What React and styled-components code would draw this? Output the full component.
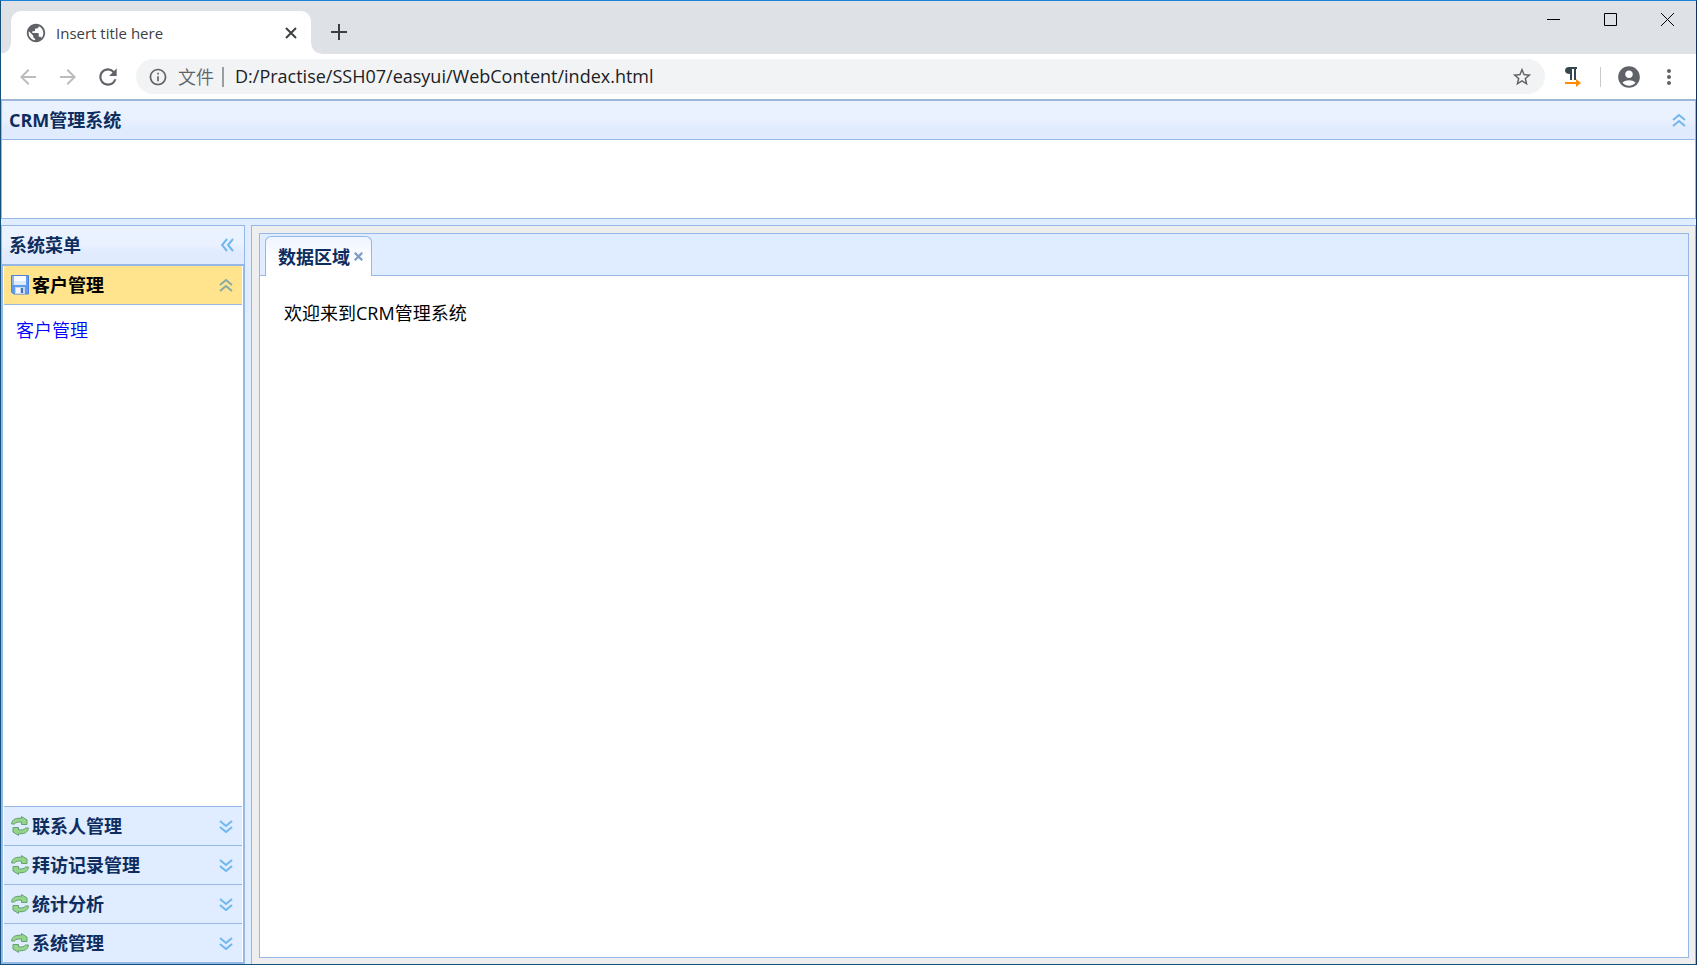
import React, { useState } from 'react';
import styled, { createGlobalStyle } from 'styled-components';
import {
  MdPublic, MdArrowBack, MdArrowForward, MdRefresh, MdInfoOutline,
  MdStarBorder, MdAccountCircle, MdMoreVert,
} from 'react-icons/md';

const GlobalStyle = createGlobalStyle`
  * { box-sizing: border-box; }
  body {
    margin: 0;
    font-family: 'Open Sans', 'Noto Sans CJK SC', sans-serif;
    font-size: 18px;
    line-height: 24px;
    color: #000;
  }
  button {
    border: 0;
    padding: 0;
    background: transparent;
    color: inherit;
    font: inherit;
    cursor: pointer;
  }
  svg { display: block; flex: none; }
`;

//  //  //  //  //  //  //
// BROWSER WINDOW       //
//  //  //  //  //  //  //

const BrowserWindow = styled.div`
  display: flex;
  flex-direction: column;
  height: 100vh;
  min-height: 560px;
  border: 1px solid #15507a;
  border-top-color: #1883d7;
  border-right-color: #14305c;
  overflow: hidden;
`;

const TabStrip = styled.header`
  display: flex;
  flex: none;
  height: 53px;
  padding: 10px 0 0 10px;
  background: #dee1e6;
`;

const BrowserTab = styled.div`
  position: relative;
  display: flex;
  align-items: center;
  width: 300px;
  padding: 0 13px 0 14px;
  border-radius: 10px 10px 0 0;
  background: #fff;
  color: #3c4043;
  font-size: 15px;
  &::before, &::after {
    content: '';
    position: absolute;
    bottom: 0;
    width: 10px;
    height: 10px;
  }
  &::before {
    right: 100%;
    background: radial-gradient(circle at 0 0, transparent 9px, #fff 10px);
  }
  &::after {
    left: 100%;
    background: radial-gradient(circle at 100% 0, transparent 9px, #fff 10px);
  }
`;

const TabTitle = styled.span`
  flex: 1;
  margin-left: 9px;
`;

const IconButton = styled.button`
  display: flex;
  align-items: center;
  justify-content: center;
  width: ${(props) => props.$width || 40}px;
  height: ${(props) => props.$height || 36}px;
  color: ${(props) => props.$color || '#5f6368'};
`;

const NewTabButton = styled(IconButton)`
  margin-left: 12px;
`;

const WindowButtons = styled.div`
  display: flex;
  margin: -10px 0 0 auto;
`;

const Toolbar = styled.nav`
  display: flex;
  flex: none;
  align-items: center;
  height: 46px;
  padding: 0 7px;
  border-bottom: 1px solid #a3b3c8;
  background: #fff;
`;

const AddressBar = styled.div`
  display: flex;
  flex: 1;
  align-items: center;
  height: 35px;
  margin-left: 8px;
  padding: 0 3px 0 12px;
  border-radius: 18px;
  background: #f1f3f4;
  color: #5f6368;
`;

const FileLabel = styled.label`
  margin-left: 10px;
  padding-right: 8px;
  border-right: 2px solid #9b9ea1;
  line-height: 20px;
  font-weight: 350;
`;

const AddressInput = styled.input`
  flex: 1;
  min-width: 0;
  margin-left: 11px;
  padding: 0 0 2px;
  border: 0;
  outline: 0;
  background: transparent;
  color: #202124;
  font: inherit;
`;

const ToolbarDivider = styled.span`
  width: 1px;
  height: 20px;
  margin: 0 8px 0 0;
  background: #c8cacd;
`;

//  //  //  //  //  //  //
// EASYUI LAYOUT        //
//  //  //  //  //  //  //

const Layout = styled.div`
  display: flex;
  flex: 1;
  flex-direction: column;
  gap: 6px;
  min-height: 0;
  background: #e0ecff;
`;

const LayoutRow = styled.div`
  display: flex;
  flex: 1;
  gap: 6px;
  min-height: 0;
`;

const NorthPanel = styled.section`
  border: 1px solid #95b8e7;
  background: #fff;
`;

const NorthBody = styled.div`
  height: 78px;
`;

const WestPanel = styled.aside`
  display: flex;
  flex: none;
  flex-direction: column;
  width: 244px;
  border: 1px solid #95b8e7;
`;

const CenterPanel = styled.main`
  display: flex;
  flex: 1;
  min-width: 0;
  padding: 7px 6px 6px 7px;
  border: 1px solid #95b8e7;
  border-bottom: 0;
  background: #eee;
`;

const PanelHeader = styled.div`
  display: flex;
  align-items: center;
  justify-content: space-between;
  height: 39px;
  padding: 0 9px 0 7px;
  border-bottom: 1px solid #95b8e7;
  background: linear-gradient(to bottom, #ebf2ff 45%, #e0ebfe 70%);
`;

const PanelTitle = styled.h1`
  margin: 0;
  color: #0e2d5f;
  font-size: 18px;
  font-weight: 700;
`;

const PanelTool = styled.button`
  display: flex;
  align-items: center;
  justify-content: center;
  width: 14px;
  height: 20px;
`;

const AccordionBox = styled.div`
  display: flex;
  flex: 1;
  flex-direction: column;
  min-height: 0;
  padding: 0 1px;
  border: 1px solid #95b8e7;
  background: #fff;
`;

const AccordionHeader = styled.button`
  display: flex;
  flex: none;
  align-items: center;
  gap: 3px;
  height: 39px;
  padding: 0 9px 0 7px;
  border: 0 solid #95b8e7;
  border-width: ${(props) => (props.$open ? '0 0 1px' : '1px 0 0')};
  background: ${(props) => (props.$open ? '#ffe48d' : '#e0ecff')};
  color: ${(props) => (props.$open ? '#000' : '#0e2d5f')};
  font-weight: 700;
  text-align: left;
`;

const AccordionTitle = styled.span`
  flex: 1;
`;

const AccordionBody = styled.div`
  flex: 1;
  min-height: 0;
  padding: 13px 12px;
`;

const MenuLink = styled.a`
  color: #00f;
  font-weight: 350;
  text-decoration: none;
`;

const Tabs = styled.div`
  display: flex;
  flex: 1;
  flex-direction: column;
  min-width: 0;
  border: 1px solid #95b8e7;
  background: #fff;
`;

const TabsHeader = styled.div`
  display: flex;
  align-items: flex-end;
  height: 42px;
  padding: 2px 5px 0;
  border-bottom: 1px solid #95b8e7;
  background: #e0ecff;
`;

const DataTab = styled.div`
  display: flex;
  align-items: center;
  height: 40px;
  margin-bottom: -1px;
  padding: 0 6px 0 12px;
  border: 1px solid #95b8e7;
  border-bottom: 0;
  border-radius: 6px 6px 0 0;
  background: linear-gradient(to bottom, #eff5ff 0, #fff 70%);
  color: #0e2d5f;
  font-weight: 700;
`;

const TabClose = styled(PanelTool)`
  margin-left: 1px;
`;

const TabBody = styled.div`
  flex: 1;
  padding: 25px 24px;
`;

//  //  //  //  //  //  //
// ICONS                //
//  //  //  //  //  //  //

const chevrons = {
  up: 'M1 7 7 2l6 5M1 13 7 8l6 5',
  down: 'M1 2 7 7l6-5M1 8l6 5 6-5',
  left: 'M6 1 1 7l5 6M12 1 7 7l5 6',
};

function ChevronIcon({ direction = 'up', color = '#6fb7ee' }) {
  return (
    <svg width="14" height="14" viewBox="0 0 14 14" fill="none" stroke={color} strokeWidth="2" aria-hidden="true">
      <path d={chevrons[direction]} />
    </svg>
  );
}

function CrossIcon({ size, color, strokeWidth }) {
  return (
    <svg width={size} height={size} viewBox="0 0 12 12" stroke={color} strokeWidth={strokeWidth} aria-hidden="true">
      <path d="M1 1 11 11M11 1 1 11" />
    </svg>
  );
}

function SaveIcon() {
  return (
    <svg width="18" height="20" viewBox="0 0 18 20" aria-hidden="true">
      <path d="M.5.500h17v18.500H2.500l-2-2z" fill="#5f9bee" stroke="#4b83dc" />
      <path d="M1 1h2v9H1z" fill="#8bb6f2" />
      <path d="M3 1h12v9H3z" fill="#f8fbff" />
      <path d="M3 6h12v4H3z" fill="#dceafa" />
      <path d="M4 12h10v7H4z" fill="#c6d6ec" />
      <path d="M5 13h4v5H5z" fill="#f4f7fb" />
      <path d="M10 13h2v5h-2z" fill="#4574bd" />
    </svg>
  );
}

function ReloadIcon() {
  return (
    <svg width="18" height="20" viewBox="0 0 18 20" fill="#93d68a" stroke="#669f73" strokeLinejoin="round" aria-hidden="true">
      <path d="M.6 8C1 4 3.500 2.600 7 2.300l3.500-.1V.6L16 4v4.500h-5.500V6.200C7.500 5.800 5 6 3.500 8z" />
      <path d="M17.400 12c-.4 4-2.900 5.400-6.400 5.700l-3.500.1v1.600L2 16v-4.500h5.500v2.300c3 .4 5.500.2 7-1.800z" />
    </svg>
  );
}

function ParagraphIcon() {
  return (
    <svg width="18" height="22" viewBox="0 0 18 22" aria-hidden="true">
      <path d="M5 1h8v2h-1v11h-2V3H8v11H6V8C3 8 1 7 1 4.500S3 1 5 1z" fill="#37474f" />
      <path d="M1 16h11v-3l5 4-5 4v-3H1z" fill="#ff8b00" />
    </svg>
  );
}

const menus = [
  { id: 'contact', title: '联系人管理' },
  { id: 'visit', title: '拜访记录管理' },
  { id: 'stats', title: '统计分析' },
  { id: 'system', title: '系统管理' },
];

function WestMenu() {
  const [open, setOpen] = useState('customer');
  const customerOpen = open === 'customer';

  return (
    <AccordionBox>
      <AccordionHeader type="button" $open={customerOpen} aria-expanded={customerOpen} onClick={() => setOpen('customer')}>
        <SaveIcon />
        <AccordionTitle>客户管理</AccordionTitle>
        <ChevronIcon direction={customerOpen ? 'up' : 'down'} color={customerOpen ? '#86a9a6' : undefined} />
      </AccordionHeader>
      {customerOpen && (
        <AccordionBody>
          <MenuLink href="#customer">客户管理</MenuLink>
        </AccordionBody>
      )}
      {menus.map((menu) => (
        <React.Fragment key={menu.id}>
          <AccordionHeader type="button" $open={open === menu.id} aria-expanded={open === menu.id} onClick={() => setOpen(menu.id)}>
            <ReloadIcon />
            <AccordionTitle>{menu.title}</AccordionTitle>
            <ChevronIcon direction={open === menu.id ? 'up' : 'down'} />
          </AccordionHeader>
          {open === menu.id && <AccordionBody />}
        </React.Fragment>
      ))}
    </AccordionBox>
  );
}

function BrowserChrome() {
  return (
    <>
      <TabStrip>
        <BrowserTab>
          <MdPublic size={22} color="#5f6368" />
          <TabTitle>Insert title here</TabTitle>
          <IconButton type="button" $width={14} aria-label="Close tab">
            <CrossIcon size={12} color="#3c4043" strokeWidth={2} />
          </IconButton>
        </BrowserTab>
        <NewTabButton type="button" $width={32} $height={42} aria-label="New tab">
          <svg width="16" height="16" viewBox="0 0 16 16" stroke="#3c4043" strokeWidth="2" aria-hidden="true">
            <path d="M8 0v16M0 8h16" />
          </svg>
        </NewTabButton>
        <WindowButtons>
          <IconButton type="button" $width={57} aria-label="Minimize">
            <svg width="13" height="13" viewBox="0 0 13 13" stroke="#000"><path d="M0 6.500h13" /></svg>
          </IconButton>
          <IconButton type="button" $width={57} aria-label="Maximize">
            <svg width="13" height="13" viewBox="0 0 13 13" fill="none" stroke="#000"><path d="M.5.5h12v12H.5z" /></svg>
          </IconButton>
          <IconButton type="button" $width={57} aria-label="Close">
            <svg width="13" height="13" viewBox="0 0 13 13" stroke="#000"><path d="M0 0 13 13M13 0 0 13" /></svg>
          </IconButton>
        </WindowButtons>
      </TabStrip>
      <Toolbar>
        <IconButton type="button" $color="#babcbe" aria-label="Back"><MdArrowBack size={24} /></IconButton>
        <IconButton type="button" $color="#babcbe" aria-label="Forward"><MdArrowForward size={24} /></IconButton>
        <IconButton type="button" aria-label="Reload"><MdRefresh size={26} /></IconButton>
        <AddressBar>
          <MdInfoOutline size={20} />
          <FileLabel htmlFor="address">文件</FileLabel>
          <AddressInput id="address" defaultValue="D:/Practise/SSH07/easyui/WebContent/index.html" />
          <IconButton type="button" aria-label="Bookmark"><MdStarBorder size={22} /></IconButton>
        </AddressBar>
        <IconButton type="button" $width={55} aria-label="Text direction"><ParagraphIcon /></IconButton>
        <ToolbarDivider />
        <IconButton type="button" aria-label="Profile"><MdAccountCircle size={26} /></IconButton>
        <IconButton type="button" aria-label="More"><MdMoreVert size={24} /></IconButton>
      </Toolbar>
    </>
  );
}

function App() {
  return (
    <BrowserWindow>
      <GlobalStyle />
      <BrowserChrome />
      <Layout>
        <NorthPanel>
          <PanelHeader>
            <PanelTitle>CRM管理系统</PanelTitle>
            <PanelTool type="button" aria-label="Collapse header"><ChevronIcon /></PanelTool>
          </PanelHeader>
          <NorthBody />
        </NorthPanel>
        <LayoutRow>
          <WestPanel>
            <PanelHeader>
              <PanelTitle as="h2">系统菜单</PanelTitle>
              <PanelTool type="button" aria-label="Collapse menu"><ChevronIcon direction="left" /></PanelTool>
            </PanelHeader>
            <WestMenu />
          </WestPanel>
          <CenterPanel>
            <Tabs>
              <TabsHeader>
                <DataTab>
                  数据区域
                  <TabClose type="button" aria-label="Close"><CrossIcon size={9} color="#7f9dc4" strokeWidth={3} /></TabClose>
                </DataTab>
              </TabsHeader>
              <TabBody>欢迎来到CRM管理系统</TabBody>
            </Tabs>
          </CenterPanel>
        </LayoutRow>
      </Layout>
    </BrowserWindow>
  );
}

export default App;
